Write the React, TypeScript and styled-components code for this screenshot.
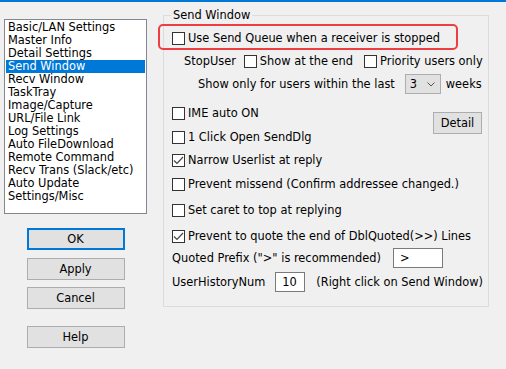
import React from 'react';
import styled, { createGlobalStyle } from 'styled-components';

const GlobalStyle = createGlobalStyle`
  html, body {
    margin: 0;
    padding: 0;
  }
  body {
    background: #f0f0f0;
    font-family: "DejaVu Sans", Verdana, sans-serif;
    font-size: 11.4px;
    color: #000;
  }
`;

const Window = styled.div`
  width: 506px;
  height: 369px;
  box-sizing: border-box;
  border-top: 2px solid #0078d7;
  padding-left: 4px;
  display: flex;
  overflow: hidden;
`;

const Sidebar = styled.div`
  width: 143px;
  padding-top: 17px;
  display: flex;
  flex-direction: column;
  align-items: center;
`;

const ListBox = styled.ul`
  list-style: none;
  margin: 0;
  padding: 1px;
  width: 143px;
  height: 195px;
  box-sizing: border-box;
  border: 1px solid #828790;
  background: #fff;
  align-self: flex-start;
`;

const ListItem = styled.li<{ $selected?: boolean }>`
  height: 13px;
  line-height: 13px;
  padding-left: 2px;
  white-space: nowrap;
  background: ${(p) => (p.$selected ? '#0078d7' : 'transparent')};
  color: ${(p) => (p.$selected ? '#fff' : '#000')};
`;

const PushButton = styled.button<{ $default?: boolean; $mt: number }>`
  margin-top: ${(p) => p.$mt}px;
  width: 98px;
  height: 22px;
  padding: 0;
  box-sizing: border-box;
  background: #e1e1e1;
  border: ${(p) => (p.$default ? '2px solid #0078d7' : '1px solid #adadad')};
  font: inherit;
  color: #000;
`;

const GroupBox = styled.fieldset`
  margin: 7px 0 0 16px;
  padding: 0 0 0 8px;
  width: 326px;
  height: 298px;
  box-sizing: border-box;
  border: 1px solid #dcdcdc;
  min-inline-size: 0;
`;

const GroupTitle = styled.legend`
  margin-left: -1px;
  padding: 0 2px;
  line-height: 13px;
`;

const Row = styled.div<{ $mt: number; $indent?: number }>`
  position: relative;
  margin-top: ${(p) => p.$mt}px;
  padding-left: ${(p) => p.$indent ?? 0}px;
  height: 20px;
  display: flex;
  align-items: center;
  white-space: nowrap;
`;

const Highlight = styled.div`
  position: absolute;
  left: -14px;
  top: -4px;
  width: 300px;
  height: 26px;
  box-sizing: border-box;
  border: 2px solid #ee3e42;
  border-radius: 5px;
  pointer-events: none;
`;

const Box = styled.span`
  width: 13px;
  height: 13px;
  box-sizing: border-box;
  border: 1px solid #333;
  background: #fff;
  display: inline-flex;
  flex: none;
`;

const Text = styled.span<{ $ml?: number }>`
  margin-left: ${(p) => p.$ml ?? 0}px;
`;

const CheckItem = styled.label<{ $ml?: number }>`
  display: inline-flex;
  align-items: center;
  gap: 3px;
  margin-left: ${(p) => p.$ml ?? 0}px;
`;

const Combo = styled.span`
  margin-left: 10px;
  width: 36px;
  height: 20px;
  box-sizing: border-box;
  background: #e1e1e1;
  border: 1px solid #adadad;
  display: inline-flex;
  align-items: center;
  justify-content: space-between;
  padding: 0 5px 0 4px;
`;

const Edit = styled.span<{ $w: number; $h: number; $ml: number }>`
  margin-left: ${(p) => p.$ml}px;
  width: ${(p) => p.$w}px;
  height: ${(p) => p.$h}px;
  box-sizing: border-box;
  background: #fff;
  border: 1px solid #7a7a7a;
  display: inline-flex;
  align-items: center;
  padding-left: 6px;
`;

const OptionsBlock = styled.div`
  display: flex;
  align-items: center;
`;

const OptionsColumn = styled.div`
  flex: 1;
`;

const DetailButton = styled.button`
  margin: 4px 6px 0 0;
  width: 49px;
  height: 22px;
  padding: 0;
  box-sizing: border-box;
  background: #e1e1e1;
  border: 1px solid #adadad;
  font: inherit;
  color: #000;
`;

const pages = [
  'Basic/LAN Settings',
  'Master Info',
  'Detail Settings',
  'Send Window',
  'Recv Window',
  'TaskTray',
  'Image/Capture',
  'URL/File Link',
  'Log Settings',
  'Auto FileDownload',
  'Remote Command',
  'Recv Trans (Slack/etc)',
  'Auto Update',
  'Settings/Misc',
];

const CheckBox = ({ checked, label, ml }: { checked?: boolean; label: string; ml?: number }) => (
  <CheckItem $ml={ml}>
    <Box>
      {checked && (
        <svg width="11" height="11" viewBox="0 0 11 11">
          <polyline points="1,5.5 4,8.5 10,2" fill="none" stroke="#444" strokeWidth="1.2" />
        </svg>
      )}
    </Box>
    <span>{label}</span>
  </CheckItem>
);

const Chevron = () => (
  <svg width="8" height="5" viewBox="0 0 8 5">
    <polyline points="0.5,0.5 4,4 7.5,0.5" fill="none" stroke="#555" strokeWidth="1" />
  </svg>
);

const App = () => {
  return (
    <>
      <GlobalStyle />
      <Window>
        <Sidebar>
          <ListBox>
            {pages.map((name) => (
              <ListItem key={name} $selected={name === 'Send Window'}>
                {name}
              </ListItem>
            ))}
          </ListBox>
          <PushButton $default $mt={14}>OK</PushButton>
          <PushButton $mt={8}>Apply</PushButton>
          <PushButton $mt={7}>Cancel</PushButton>
          <PushButton $mt={17}>Help</PushButton>
        </Sidebar>

        <GroupBox>
          <GroupTitle>Send Window</GroupTitle>
          <Row $mt={6}>
            <Highlight />
            <CheckBox label="Use Send Queue when a receiver is stopped" />
          </Row>
          <Row $mt={3} $indent={12}>
            <Text>StopUser</Text>
            <CheckBox ml={8} label="Show at the end" />
            <CheckBox ml={11} label="Priority users only" />
          </Row>
          <Row $mt={3} $indent={26}>
            <Text>Show only for users within the last</Text>
            <Combo>
              <span>3</span>
              <Chevron />
            </Combo>
            <Text $ml={5}>weeks</Text>
          </Row>
          <OptionsBlock>
            <OptionsColumn>
              <Row $mt={9}>
                <CheckBox label="IME auto ON" />
              </Row>
              <Row $mt={4}>
                <CheckBox label="1 Click Open SendDlg" />
              </Row>
            </OptionsColumn>
            <DetailButton>Detail</DetailButton>
          </OptionsBlock>
          <Row $mt={3}>
            <CheckBox checked label="Narrow Userlist at reply" />
          </Row>
          <Row $mt={4}>
            <CheckBox label="Prevent missend (Confirm addressee changed.)" />
          </Row>
          <Row $mt={6}>
            <CheckBox label="Set caret to top at replying" />
          </Row>
          <Row $mt={6}>
            <CheckBox checked label="Prevent to quote the end of DblQuoted(>>) Lines" />
          </Row>
          <Row $mt={2}>
            <Text>Quoted Prefix ("&gt;" is recommended)</Text>
            <Edit $ml={12} $w={50} $h={20}>&gt;</Edit>
          </Row>
          <Row $mt={4}>
            <Text>UserHistoryNum</Text>
            <Edit $ml={10} $w={30} $h={20}>10</Edit>
            <Text $ml={11}>(Right click on Send Window)</Text>
          </Row>
        </GroupBox>
      </Window>
    </>
  );
};

export default App;
